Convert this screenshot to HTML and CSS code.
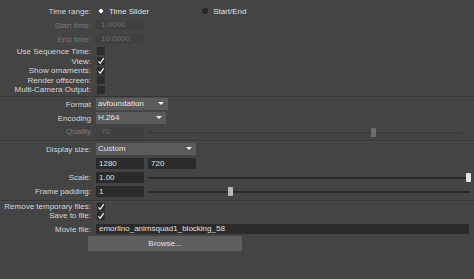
FILE: index.html
```html
<!DOCTYPE html>
<html>
<head>
<meta charset="utf-8">
<link rel="stylesheet" href="styles.css">
</head>
<body>
<div class="panel">
  <div class="row h14">
    <span class="lbl">Time range:</span>
    <div class="ctl radios">
      <span class="radio on"></span><span class="rtext">Time Slider</span>
      <span class="radio off"></span><span class="rtext">Start/End</span>
    </div>
  </div>
  <div class="row h14 dis">
    <span class="lbl">Start time:</span>
    <div class="ctl"><span class="field dfield">1.0000</span></div>
  </div>
  <div class="row h14 dis">
    <span class="lbl">End time:</span>
    <div class="ctl"><span class="field dfield">10.0000</span></div>
  </div>
  <div class="row h10">
    <span class="lbl">Use Sequence Time:</span>
    <div class="ctl"><span class="cb"></span></div>
  </div>
  <div class="row h10">
    <span class="lbl">View:</span>
    <div class="ctl"><span class="cb"><svg viewBox="0 0 8 8"><path d="M1.5 4.3 L3.2 6.2 L6.8 1.2" fill="none" stroke="#f2f2f2" stroke-width="1.2"/></svg></span></div>
  </div>
  <div class="row h9">
    <span class="lbl">Show ornaments:</span>
    <div class="ctl"><span class="cb"><svg viewBox="0 0 8 8"><path d="M1.5 4.3 L3.2 6.2 L6.8 1.2" fill="none" stroke="#f2f2f2" stroke-width="1.2"/></svg></span></div>
  </div>
  <div class="row h10">
    <span class="lbl">Render offscreen:</span>
    <div class="ctl"><span class="cb"></span></div>
  </div>
  <div class="row h9">
    <span class="lbl">Multi-Camera Output:</span>
    <div class="ctl"><span class="cb"></span></div>
  </div>
  <div class="sep s1"></div>
  <div class="row h12">
    <span class="lbl">Format</span>
    <div class="ctl"><span class="dd w72">avfoundation<span class="arrow"></span></span></div>
  </div>
  <div class="row h12 mt2">
    <span class="lbl">Encoding</span>
    <div class="ctl"><span class="dd w70">H.264<span class="arrow"></span></span></div>
  </div>
  <div class="row h15 dis">
    <span class="lbl">Quality</span>
    <div class="ctl pr11">
      <span class="field dfield">70</span>
      <div class="slider dslider"><span class="handle" style="left:223px"></span></div>
    </div>
  </div>
  <div class="sep s2"></div>
  <div class="row h12 mt1">
    <span class="lbl">Display size:</span>
    <div class="ctl"><span class="dd w100">Custom<span class="arrow"></span></span></div>
  </div>
  <div class="row h11 mt3">
    <span class="lbl"></span>
    <div class="ctl"><span class="field">1280</span><span class="field">720</span></div>
  </div>
  <div class="row h11 mt3">
    <span class="lbl">Scale:</span>
    <div class="ctl pr4">
      <span class="field">1.00</span>
      <div class="slider"><span class="handle bright" style="left:318px"></span></div>
    </div>
  </div>
  <div class="row h11 mt3">
    <span class="lbl">Frame padding:</span>
    <div class="ctl pr4">
      <span class="field">1</span>
      <div class="slider"><span class="handle" style="left:80px"></span></div>
    </div>
  </div>
  <div class="sep s3"></div>
  <div class="row h9">
    <span class="lbl">Remove temporary files:</span>
    <div class="ctl"><span class="cb"><svg viewBox="0 0 8 8"><path d="M1.5 4.3 L3.2 6.2 L6.8 1.2" fill="none" stroke="#f2f2f2" stroke-width="1.2"/></svg></span></div>
  </div>
  <div class="row h9">
    <span class="lbl">Save to file:</span>
    <div class="ctl"><span class="cb"><svg viewBox="0 0 8 8"><path d="M1.5 4.3 L3.2 6.2 L6.8 1.2" fill="none" stroke="#f2f2f2" stroke-width="1.2"/></svg></span></div>
  </div>
  <div class="row h10 mt4">
    <span class="lbl">Movie file:</span>
    <div class="ctl pr5"><span class="field wide">emorlino_animsquad1_blocking_58</span></div>
  </div>
  <div class="browse">Browse...</div>
</div>
</body>
</html>
```

FILE: styles.css
```css
html, body {
  margin: 0;
  padding: 0;
  background: #444444;
}
body {
  width: 474px;
  height: 279px;
  overflow: hidden;
  font-family: "Liberation Sans", Arial, sans-serif;
  font-size: 8px;
  color: #d6d6d6;
}
.panel {
  display: flex;
  flex-direction: column;
  padding-top: 4px;
}
.row {
  display: grid;
  grid-template-columns: 91px 1fr;
  column-gap: 5px;
  align-items: center;
}
.h9 { height: 9px; }
.h10 { height: 10px; }
.h11 { height: 11px; }
.h12 { height: 12px; }
.h14 { height: 14px; }
.h15 { height: 15px; }
.mt1 { margin-top: 1px; }
.mt2 { margin-top: 2px; }
.mt3 { margin-top: 3px; }
.mt4 { margin-top: 4px; }
.lbl {
  text-align: right;
  white-space: nowrap;
  line-height: 9px;
}
.ctl {
  display: flex;
  align-items: center;
  gap: 4px;
  height: 100%;
}
.pr4 { padding-right: 4px; }
.pr5 { padding-right: 5px; }
.pr11 { padding-right: 11px; }
.dis .lbl { color: #7a7a7a; }
.radios { gap: 0; }
.radio {
  width: 6px;
  height: 6px;
  border-radius: 50%;
  box-sizing: border-box;
  flex: none;
}
.radio.on {
  margin-left: 2px;
  background: radial-gradient(circle, #f4f4f4 0 1.6px, #5a5a5a 2.2px, #444 3px);
}
.radio.off {
  margin-left: 53px;
  background: #262626;
}
.rtext {
  margin-left: 5px;
  color: #e2e2e2;
}
.field {
  width: 48px;
  height: 11px;
  box-sizing: border-box;
  background: #2b2b2b;
  color: #e0e0e0;
  padding-left: 3px;
  line-height: 11px;
  flex: none;
  white-space: nowrap;
}
.dfield {
  background: #3f3f3f;
  color: #6e6e6e;
  padding-left: 5px;
  height: 10px;
  line-height: 10px;
}
.field.wide {
  flex: 1;
  height: 10px;
  line-height: 10px;
}
.cb {
  width: 8px;
  height: 8px;
  margin-left: 1px;
  background: #2c2c2c;
  display: block;
}
.cb svg {
  display: block;
  width: 8px;
  height: 8px;
}
.dd {
  position: relative;
  height: 12px;
  line-height: 12px;
  box-sizing: border-box;
  padding-left: 2px;
  background: #5b5b5b;
  color: #e6e6e6;
  white-space: nowrap;
}
.w72 { width: 72px; }
.w70 { width: 70px; }
.w100 { width: 100px; }
.arrow {
  position: absolute;
  right: 4px;
  top: 4px;
  width: 0;
  height: 0;
  border-left: 3px solid transparent;
  border-right: 3px solid transparent;
  border-top: 3px solid #eeeeee;
}
.slider {
  position: relative;
  flex: 1;
  height: 11px;
}
.slider::before {
  content: "";
  position: absolute;
  left: 0;
  right: 0;
  top: 5px;
  height: 2px;
  background: #2a2a2a;
}
.dslider::before {
  background: #3b3b3b;
  top: 6px;
}
.handle {
  position: absolute;
  top: 1px;
  width: 5px;
  height: 9px;
  border-radius: 1px;
  background: #b8b8b8;
}
.handle.bright { background: #e4e4e4; }
.dslider .handle {
  background: #6d6d6d;
  top: 2px;
}
.sep {
  height: 1px;
  background: #353535;
  border-bottom: 1px solid #4b4b4b;
}
.s1 { margin: 2px 0 0 0; }
.s2 { margin: 1px 0 0 0; }
.s3 { margin: 3px 0 0 0; }
.browse {
  margin-top: 2px;
  margin-left: 88px;
  width: 154px;
  height: 15px;
  line-height: 15px;
  text-align: center;
  background: #5f5f5f;
  color: #e6e6e6;
}
```
